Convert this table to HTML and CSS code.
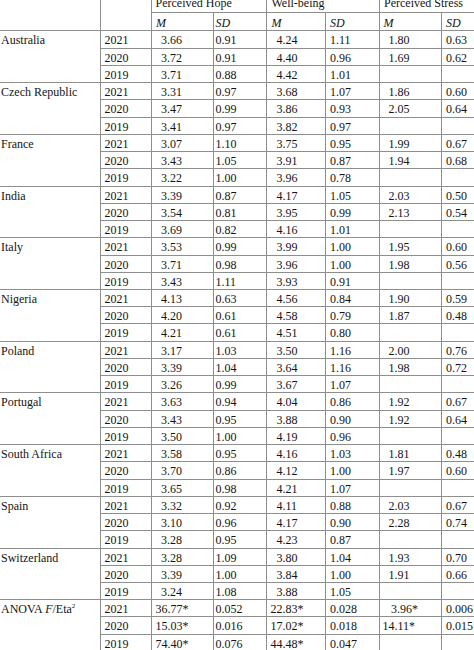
FILE: index.html
```html
<!DOCTYPE html>
<html>
<head>
<meta charset="utf-8">
<link rel="stylesheet" href="styles.css">
</head>
<body>
<table class="tbl">
<colgroup>
<col class="k0"><col class="k1"><col class="k2"><col class="k3"><col class="k4"><col class="k5"><col class="k6"><col class="k7">
</colgroup>
<tr class="h1">
<td rowspan="2" class="cn"></td><td rowspan="2" class="bl"></td>
<td colspan="2" class="bl hp">Perceived Hope</td>
<td colspan="2" class="bl hw">Well-being</td>
<td colspan="2" class="bl hs">Perceived Stress</td>
</tr>
<tr class="h2">
<td class="bl bt hm1"><i>M</i></td><td class="bl bt hd1"><i>SD</i></td>
<td class="bl bt hm2"><i>M</i></td><td class="bl bt hd2"><i>SD</i></td>
<td class="bl bt hm3"><i>M</i></td><td class="bl bt hd3"><i>SD</i></td>
</tr>

<tr class="d"><td rowspan="3" class="cn bt">Australia</td><td class="y">2021</td><td class="c1">3.66</td><td class="c2">0.91</td><td class="c3">4.24</td><td class="c4">1.11</td><td class="c5">1.80</td><td class="c6">0.63</td></tr>
<tr class="d"><td class="y">2020</td><td class="c1">3.72</td><td class="c2">0.91</td><td class="c3">4.40</td><td class="c4">0.96</td><td class="c5">1.69</td><td class="c6">0.62</td></tr>
<tr class="d"><td class="y">2019</td><td class="c1">3.71</td><td class="c2">0.88</td><td class="c3">4.42</td><td class="c4">1.01</td><td class="c5"></td><td class="c6"></td></tr>

<tr class="d"><td rowspan="3" class="cn bt">Czech Republic</td><td class="y">2021</td><td class="c1">3.31</td><td class="c2">0.97</td><td class="c3">3.68</td><td class="c4">1.07</td><td class="c5">1.86</td><td class="c6">0.60</td></tr>
<tr class="d"><td class="y">2020</td><td class="c1">3.47</td><td class="c2">0.99</td><td class="c3">3.86</td><td class="c4">0.93</td><td class="c5">2.05</td><td class="c6">0.64</td></tr>
<tr class="d"><td class="y">2019</td><td class="c1">3.41</td><td class="c2">0.97</td><td class="c3">3.82</td><td class="c4">0.97</td><td class="c5"></td><td class="c6"></td></tr>

<tr class="d"><td rowspan="3" class="cn bt">France</td><td class="y">2021</td><td class="c1">3.07</td><td class="c2">1.10</td><td class="c3">3.75</td><td class="c4">0.95</td><td class="c5">1.99</td><td class="c6">0.67</td></tr>
<tr class="d"><td class="y">2020</td><td class="c1">3.43</td><td class="c2">1.05</td><td class="c3">3.91</td><td class="c4">0.87</td><td class="c5">1.94</td><td class="c6">0.68</td></tr>
<tr class="d"><td class="y">2019</td><td class="c1">3.22</td><td class="c2">1.00</td><td class="c3">3.96</td><td class="c4">0.78</td><td class="c5"></td><td class="c6"></td></tr>

<tr class="d"><td rowspan="3" class="cn bt">India</td><td class="y">2021</td><td class="c1">3.39</td><td class="c2">0.87</td><td class="c3">4.17</td><td class="c4">1.05</td><td class="c5">2.03</td><td class="c6">0.50</td></tr>
<tr class="d"><td class="y">2020</td><td class="c1">3.54</td><td class="c2">0.81</td><td class="c3">3.95</td><td class="c4">0.99</td><td class="c5">2.13</td><td class="c6">0.54</td></tr>
<tr class="d"><td class="y">2019</td><td class="c1">3.69</td><td class="c2">0.82</td><td class="c3">4.16</td><td class="c4">1.01</td><td class="c5"></td><td class="c6"></td></tr>

<tr class="d"><td rowspan="3" class="cn bt">Italy</td><td class="y">2021</td><td class="c1">3.53</td><td class="c2">0.99</td><td class="c3">3.99</td><td class="c4">1.00</td><td class="c5">1.95</td><td class="c6">0.60</td></tr>
<tr class="d"><td class="y">2020</td><td class="c1">3.71</td><td class="c2">0.98</td><td class="c3">3.96</td><td class="c4">1.00</td><td class="c5">1.98</td><td class="c6">0.56</td></tr>
<tr class="d"><td class="y">2019</td><td class="c1">3.43</td><td class="c2">1.11</td><td class="c3">3.93</td><td class="c4">0.91</td><td class="c5"></td><td class="c6"></td></tr>

<tr class="d"><td rowspan="3" class="cn bt">Nigeria</td><td class="y">2021</td><td class="c1">4.13</td><td class="c2">0.63</td><td class="c3">4.56</td><td class="c4">0.84</td><td class="c5">1.90</td><td class="c6">0.59</td></tr>
<tr class="d"><td class="y">2020</td><td class="c1">4.20</td><td class="c2">0.61</td><td class="c3">4.58</td><td class="c4">0.79</td><td class="c5">1.87</td><td class="c6">0.48</td></tr>
<tr class="d"><td class="y">2019</td><td class="c1">4.21</td><td class="c2">0.61</td><td class="c3">4.51</td><td class="c4">0.80</td><td class="c5"></td><td class="c6"></td></tr>

<tr class="d"><td rowspan="3" class="cn bt">Poland</td><td class="y">2021</td><td class="c1">3.17</td><td class="c2">1.03</td><td class="c3">3.50</td><td class="c4">1.16</td><td class="c5">2.00</td><td class="c6">0.76</td></tr>
<tr class="d"><td class="y">2020</td><td class="c1">3.39</td><td class="c2">1.04</td><td class="c3">3.64</td><td class="c4">1.16</td><td class="c5">1.98</td><td class="c6">0.72</td></tr>
<tr class="d"><td class="y">2019</td><td class="c1">3.26</td><td class="c2">0.99</td><td class="c3">3.67</td><td class="c4">1.07</td><td class="c5"></td><td class="c6"></td></tr>

<tr class="d"><td rowspan="3" class="cn bt">Portugal</td><td class="y">2021</td><td class="c1">3.63</td><td class="c2">0.94</td><td class="c3">4.04</td><td class="c4">0.86</td><td class="c5">1.92</td><td class="c6">0.67</td></tr>
<tr class="d"><td class="y">2020</td><td class="c1">3.43</td><td class="c2">0.95</td><td class="c3">3.88</td><td class="c4">0.90</td><td class="c5">1.92</td><td class="c6">0.64</td></tr>
<tr class="d"><td class="y">2019</td><td class="c1">3.50</td><td class="c2">1.00</td><td class="c3">4.19</td><td class="c4">0.96</td><td class="c5"></td><td class="c6"></td></tr>

<tr class="d"><td rowspan="3" class="cn bt">South Africa</td><td class="y">2021</td><td class="c1">3.58</td><td class="c2">0.95</td><td class="c3">4.16</td><td class="c4">1.03</td><td class="c5">1.81</td><td class="c6">0.48</td></tr>
<tr class="d"><td class="y">2020</td><td class="c1">3.70</td><td class="c2">0.86</td><td class="c3">4.12</td><td class="c4">1.00</td><td class="c5">1.97</td><td class="c6">0.60</td></tr>
<tr class="d"><td class="y">2019</td><td class="c1">3.65</td><td class="c2">0.98</td><td class="c3">4.21</td><td class="c4">1.07</td><td class="c5"></td><td class="c6"></td></tr>

<tr class="d"><td rowspan="3" class="cn bt">Spain</td><td class="y">2021</td><td class="c1">3.32</td><td class="c2">0.92</td><td class="c3">4.11</td><td class="c4">0.88</td><td class="c5">2.03</td><td class="c6">0.67</td></tr>
<tr class="d"><td class="y">2020</td><td class="c1">3.10</td><td class="c2">0.96</td><td class="c3">4.17</td><td class="c4">0.90</td><td class="c5">2.28</td><td class="c6">0.74</td></tr>
<tr class="d"><td class="y">2019</td><td class="c1">3.28</td><td class="c2">0.95</td><td class="c3">4.23</td><td class="c4">0.87</td><td class="c5"></td><td class="c6"></td></tr>

<tr class="d"><td rowspan="3" class="cn bt">Switzerland</td><td class="y">2021</td><td class="c1">3.28</td><td class="c2">1.09</td><td class="c3">3.80</td><td class="c4">1.04</td><td class="c5">1.93</td><td class="c6">0.70</td></tr>
<tr class="d"><td class="y">2020</td><td class="c1">3.39</td><td class="c2">1.00</td><td class="c3">3.84</td><td class="c4">1.00</td><td class="c5">1.91</td><td class="c6">0.66</td></tr>
<tr class="d"><td class="y">2019</td><td class="c1">3.24</td><td class="c2">1.08</td><td class="c3">3.88</td><td class="c4">1.05</td><td class="c5"></td><td class="c6"></td></tr>

<tr class="d"><td rowspan="3" class="cn bt">ANOVA <i>F</i>/Eta<sup>2</sup></td><td class="y">2021</td><td class="c1 w">36.77*</td><td class="c2">0.052</td><td class="c3 w">22.83*</td><td class="c4">0.028</td><td class="c5 x">3.96*</td><td class="c6">0.006</td></tr>
<tr class="d"><td class="y">2020</td><td class="c1 w">15.03*</td><td class="c2">0.016</td><td class="c3 w">17.02*</td><td class="c4">0.018</td><td class="c5 w">14.11*</td><td class="c6">0.015</td></tr>
<tr class="d"><td class="y">2019</td><td class="c1 w">74.40*</td><td class="c2">0.076</td><td class="c3 w">44.48*</td><td class="c4">0.047</td><td class="c5"></td><td class="c6"></td></tr>
</table>
</body>
</html>
```

FILE: styles.css
```css
html, body {
  margin: 0;
  padding: 0;
  background: #ffffff;
  overflow: hidden;
}
body {
  width: 474px;
  height: 650px;
  font-family: "Liberation Serif", "Times New Roman", serif;
  font-size: 12px;
  color: #141414;
}
.tbl {
  border-collapse: collapse;
  table-layout: fixed;
  width: 491px;
  margin-top: -3.5px;
}
.k0 { width: 100px; }
.k1 { width: 51px; }
.k2 { width: 62px; }
.k3 { width: 53px; }
.k4 { width: 59.5px; }
.k5 { width: 53.5px; }
.k6 { width: 62.5px; }
.k7 { width: 50px; }
td {
  padding: 0;
  white-space: nowrap;
  overflow: hidden;
  text-align: left;
}
.bl { border-left: 1px solid #8e8e8e; }
.bt { border-top: 1px solid #8e8e8e; }
.h1 { height: 15.8px; }
.h1 td { vertical-align: top; line-height: 13px; }
.h2 { height: 18.7px; }
.h2 td { vertical-align: top; line-height: 14px; padding-top: 3px; }
.hp { padding-left: 4px; }
.hw { padding-left: 5px; }
.hs { padding-left: 4.5px; }
.hm1 { padding-left: 4.5px; }
.hd1 { padding-left: 2px; }
.hm2 { padding-left: 5px; }
.hd2 { padding-left: 4px; }
.hm3 { padding-left: 4px; }
.hd3 { padding-left: 4px; }
.d { height: 17.24px; }
.d td {
  border-top: 1px solid #8e8e8e;
  border-left: 1px solid #8e8e8e;
  vertical-align: top;
  line-height: 14px;
  padding-top: 2px;
}
.d td.cn {
  border-left: none;
  padding-left: 1px;
}
.y { padding-left: 4px; }
.c1 { padding-left: 9.5px; }
.c2 { padding-left: 2px; }
.c3 { padding-left: 10px; }
.c4 { padding-left: 4px; }
.c5 { padding-left: 9px; }
.c6 { padding-left: 4px; }
.d td.w { padding-left: 4px; }
.d td.c5.w { padding-left: 3px; }
.d td.c5.x { padding-left: 11.5px; }
sup {
  font-size: 7px;
  line-height: 0;
  vertical-align: 5px;
}
```
